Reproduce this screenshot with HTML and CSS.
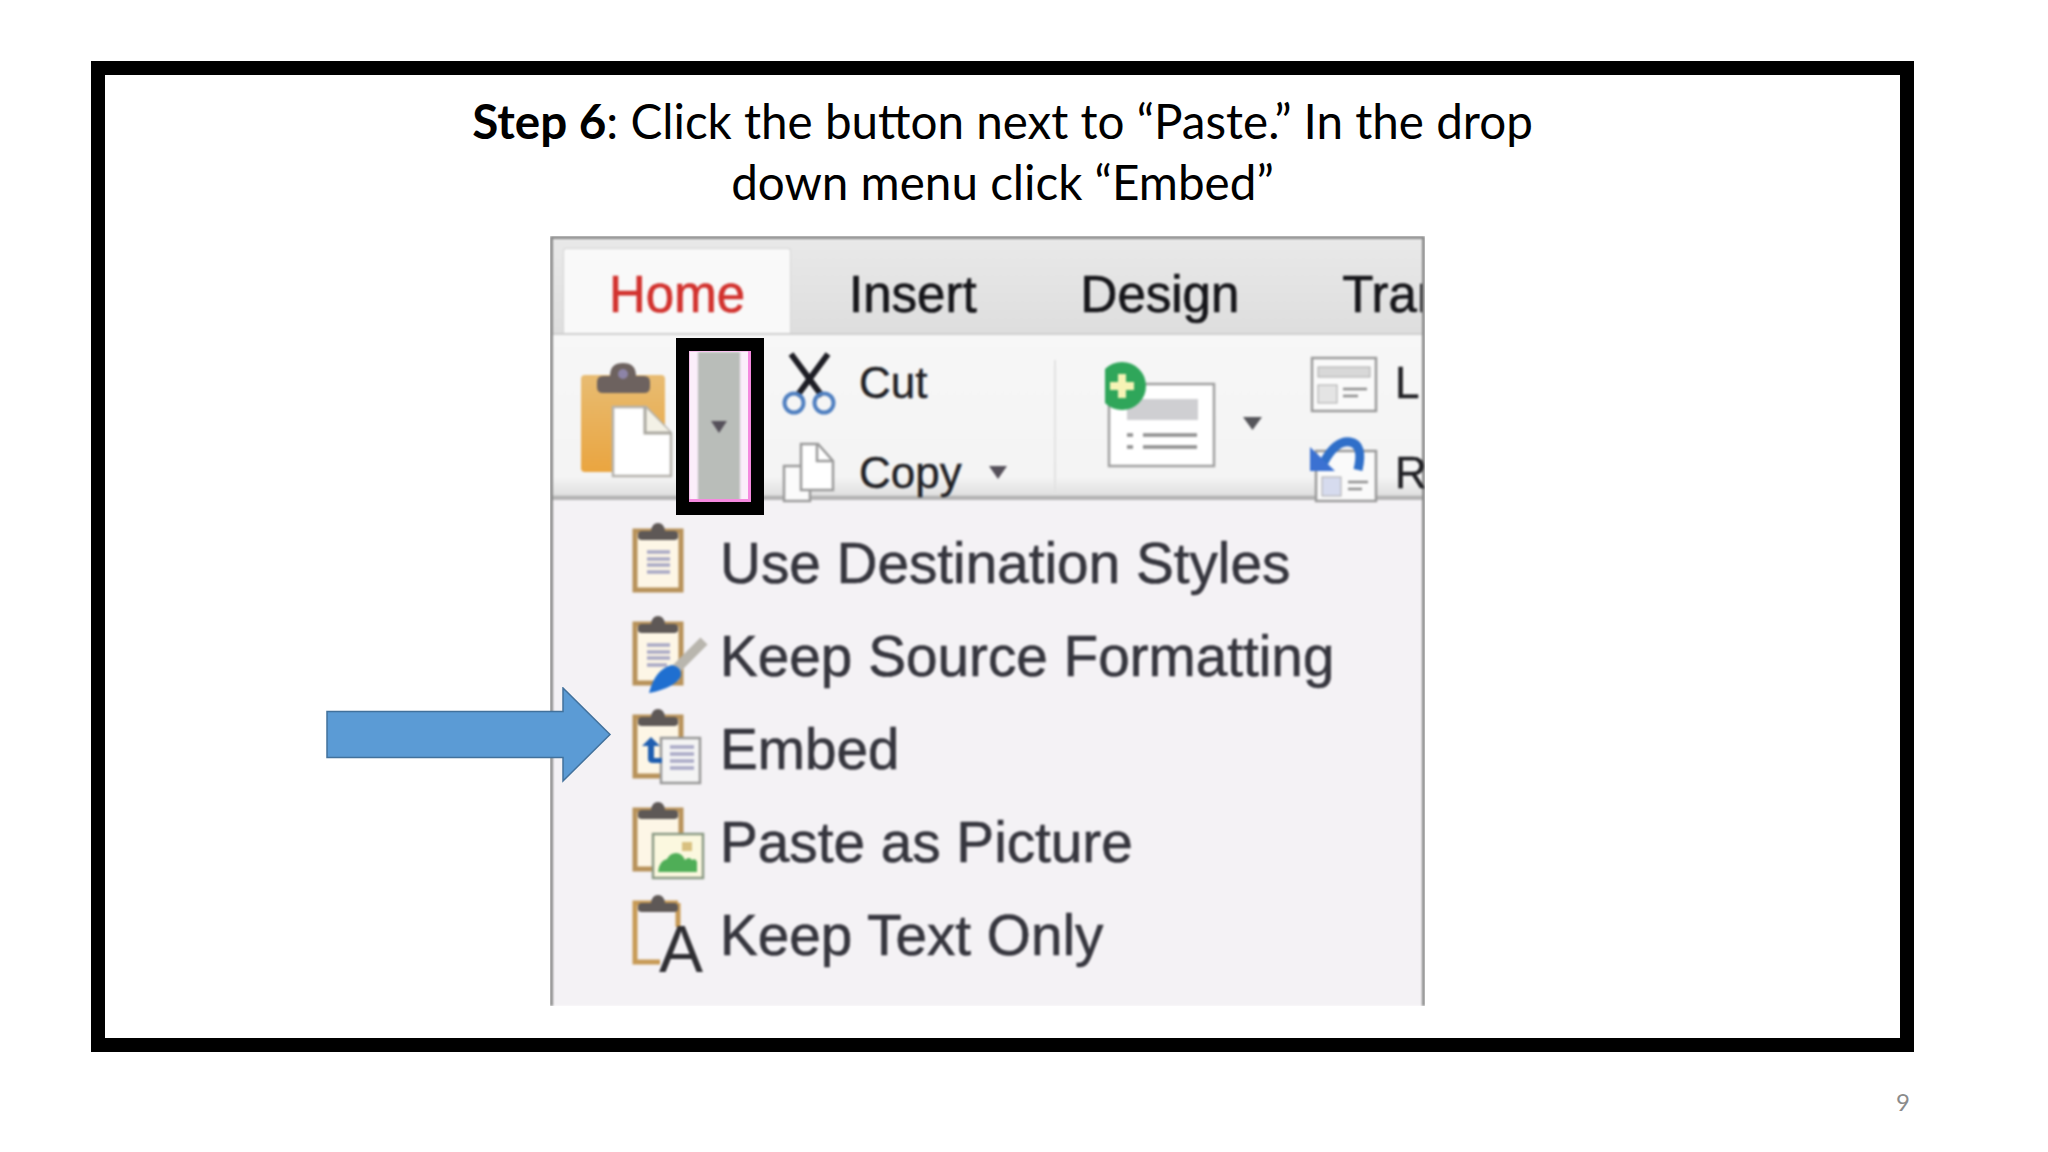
FILE: index.html
```html
<!DOCTYPE html>
<html lang="en">
<head>
<meta charset="utf-8">
<title>Step 6</title>
<link rel="stylesheet" href="styles.css">
</head>
<body>
<main class="slide">
  <section class="frame">
    <h1 class="title"><b>Step 6</b>: Click the button next to “Paste.” In the drop<br>down menu click “Embed”</h1>
    <div class="shot">
      <div class="shot-img">
        <div class="tabs">
          <span class="tab tab-active">Home</span>
          <span class="tab tab-insert">Insert</span>
          <span class="tab tab-design">Design</span>
          <span class="tab tab-trans">Tran</span>
        </div>
        <div class="ribbon">
          <svg class="ico-paste" viewBox="578 352 98 130" aria-hidden="true">
            <defs>
              <linearGradient id="pasteBoard" x1="0" y1="0" x2="0" y2="1">
                <stop offset="0" stop-color="#e8bc72"/>
                <stop offset="1" stop-color="#eaa540"/>
              </linearGradient>
            </defs>
            <rect x="581" y="375" width="84" height="97" rx="4" fill="url(#pasteBoard)"/>
            <path d="M597 382q0-6 6-6h7q0-13 13-13t13 13h8q6 0 6 6v5q0 6-6 6h-41q-6 0-6-6z" fill="#6d625f"/>
            <circle cx="623" cy="374" r="5" fill="#8d84a8"/>
            <path d="M613 407h33l25 26v43h-58z" fill="#fff" stroke="#b5b2ad" stroke-width="2.5"/>
            <path d="M645 407v26h26" fill="#f3f1e6" stroke="#aaa8a0" stroke-width="3"/>
          </svg>
          <div class="paste-btn"><i class="caret caret-small"></i></div>
          <div class="clip-col">
            <div class="rib-row">
              <svg class="ico-clip" viewBox="782 352 56 61" aria-hidden="true">
                <path d="M791 354l31 42M828 354l-31 42" stroke="#1d1d24" stroke-width="6" fill="none"/>
                <circle cx="794" cy="403" r="9.5" fill="none" stroke="#4f7fc0" stroke-width="4"/>
                <circle cx="824" cy="403" r="9.5" fill="none" stroke="#4f7fc0" stroke-width="4"/>
              </svg>
              <span class="rib-text">Cut</span>
            </div>
            <div class="rib-row">
              <svg class="ico-clip" viewBox="782 442 56 61" aria-hidden="true">
                <path d="M784 466h26v35h-26z" fill="#fbfbfb" stroke="#9b9b9b" stroke-width="2.5"/>
                <path d="M801 444h17l15 17v29h-32z" fill="#fff" stroke="#9b9b9b" stroke-width="2.5"/>
                <path d="M817 444v17h16" fill="none" stroke="#9b9b9b" stroke-width="2.5"/>
              </svg>
              <span class="rib-text">Copy</span>
              <i class="caret caret-copy"></i>
            </div>
          </div>
          <div class="divider"></div>
          <svg class="ico-new" viewBox="1105 352 160 140" aria-hidden="true">
            <rect x="1109" y="384" width="105" height="82" fill="#fff" stroke="#a0a0a0" stroke-width="2.5"/>
            <rect x="1127" y="399" width="71" height="21" fill="#cfcfd2"/>
            <path d="M1127 435h6M1127 447h6M1143 435h54M1143 447h54" stroke="#8e8e8e" stroke-width="3.5"/>
            <circle cx="1122" cy="386" r="24" fill="#2fa65a"/>
            <path d="M1122 374v24M1110 386h24" stroke="#f6f3b5" stroke-width="8"/>
            <path d="M1243 417h19l-9.500 13z" fill="#55555a"/>
          </svg>
          <div class="layout-col">
            <div class="rib-row">
              <svg class="ico-layout" viewBox="1310 352 70 61" aria-hidden="true">
                <rect x="1312" y="358" width="64" height="53" fill="#fafafa" stroke="#9a9a9a" stroke-width="2.5"/>
                <rect x="1318" y="367" width="52" height="10" fill="#d8d8d8" stroke="#aaa"/>
                <rect x="1318" y="385" width="19" height="18" fill="#e4e4e4" stroke="#aaa"/>
                <path d="M1343 389h24M1343 396h15" stroke="#8e8e8e" stroke-width="2.500"/>
              </svg>
              <span class="rib-text">L</span>
            </div>
            <div class="rib-row">
              <svg class="ico-layout" viewBox="1310 442 70 61" aria-hidden="true">
                <rect x="1316" y="451" width="60" height="50" fill="#fafafa" stroke="#9a9a9a" stroke-width="2.500"/>
                <rect x="1322" y="477" width="19" height="19" fill="#d6dbee" stroke="#aaa"/>
                <path d="M1348 482h20M1348 489h14" stroke="#8e8e8e" stroke-width="2.500"/>
                <path d="M1324 462q12-22 26-20t8 28" fill="none" stroke="#2f6fc9" stroke-width="9"/>
                <path d="M1310 447l25 24h-25z" fill="#3b71d2"/>
              </svg>
              <span class="rib-text">R</span>
            </div>
          </div>
        </div>
        <ul class="menu">
          <li class="menu-item">
            <svg class="ico-menu" viewBox="0 0 80 93" aria-hidden="true">
              <rect class="board" x="5" y="11" width="46" height="59"/>
              <path d="M17 32h23M17 39h23M17 45h23M17 52h23" class="doc-lines"/>
              <path class="clipper" d="M8 15q0-4 4-4h9q1-8 7-8t7 8h9q4 0 4 4v2q0 3-4 3h-32q-4 0-4-3z"/>
            </svg>
            <span>Use Destination Styles</span>
          </li>
          <li class="menu-item">
            <svg class="ico-menu" viewBox="0 0 80 93" aria-hidden="true">
              <rect class="board" x="5" y="11" width="46" height="59"/>
              <path d="M17 32h23M17 39h23M17 45h23M17 52h20" class="doc-lines"/>
              <path class="clipper" d="M8 15q0-4 4-4h9q1-8 7-8t7 8h9q4 0 4 4v2q0 3-4 3h-32q-4 0-4-3z"/>
              <path d="M74 28L46 56" stroke="#b9b6ae" stroke-width="10"/>
              <path d="M42 52q10 2 9 11-6 12-32 17 6-24 23-28z" fill="#1f6fd0"/>
            </svg>
            <span>Keep Source Formatting</span>
          </li>
          <li class="menu-item">
            <svg class="ico-menu" viewBox="0 0 80 93" aria-hidden="true">
              <rect class="board" x="5" y="11" width="46" height="59"/>
              <path class="clipper" d="M8 15q0-4 4-4h9q1-8 7-8t7 8h9q4 0 4 4v2q0 3-4 3h-32q-4 0-4-3z"/>
              <rect x="31" y="32" width="39" height="45" fill="#f4f4f4" stroke="#999" stroke-width="2.500"/>
              <path d="M40 41h24M40 48h24M40 55h24M40 62h24" class="doc-lines"/>
              <path d="M21 31l-9 9h6v13q0 4 5 4h9v-5h-8v-12h6z" fill="#1f5eb0"/>
            </svg>
            <span>Embed</span>
          </li>
          <li class="menu-item">
            <svg class="ico-menu" viewBox="0 0 80 93" aria-hidden="true">
              <rect class="board" x="5" y="11" width="46" height="59"/>
              <path class="clipper" d="M8 15q0-4 4-4h9q1-8 7-8t7 8h9q4 0 4 4v2q0 3-4 3h-32q-4 0-4-3z"/>
              <rect x="23" y="35" width="50" height="44" fill="#fbf8df" stroke="#8b9a85" stroke-width="2.500"/>
              <rect x="52" y="43" width="10" height="9" fill="#d8c080"/>
              <path d="M28 73q1-11 9-13 3-6 9-6t9 7q4-4 7 0 4-2 5 2v10z" fill="#4fae57"/>
            </svg>
            <span>Paste as Picture</span>
          </li>
          <li class="menu-item">
            <svg class="ico-menu" viewBox="0 0 80 93" aria-hidden="true">
              <path class="board board-plain" d="M48 11H5v59h25M48 11v24"/>
              <path class="clipper" d="M8 15q0-4 4-4h9q1-8 7-8t7 8h9q4 0 4 4v2q0 3-4 3h-32q-4 0-4-3z"/>
              <text class="ico-letter" x="29" y="80">A</text>
            </svg>
            <span>Keep Text Only</span>
          </li>
        </ul>
      </div>
      <div class="highlight"></div>
    </div>
    <svg class="arrow" viewBox="0 0 286 96" aria-hidden="true">
      <path d="M1 24.500H237V1L284 47.500 237 94V70.500H1z"/>
    </svg>
  </section>
  <footer class="page-no">9</footer>
</main>
</body>
</html>
```
FILE: styles.css
```css
* { box-sizing: border-box; }
html, body { margin: 0; padding: 0; background: #fff; }
body { width: 2048px; height: 1152px; overflow: hidden; font-family: "Lato", "Liberation Sans", sans-serif; }

.slide { display: flex; flex-direction: column; height: 1152px; padding: 61px 134px 0 91px; }

.frame {
  position: relative;
  height: 991px;
  border: 14px solid #000;
  display: flex;
  flex-direction: column;
  align-items: center;
  padding-top: 15px;
}

.title {
  margin: 0;
  font-size: 47.600px;
  font-weight: 400;
  line-height: 61px;
  text-align: center;
  color: #000;
}
.title b { font-weight: 700; }

.shot {
  position: absolute;
  left: 445px;
  top: 161px;
  width: 875px;
  height: 770px;
  overflow: hidden;
}

.shot-img {
  height: 100%;
  display: flex;
  flex-direction: column;
  background: #f4f2f5;
  border: 3px solid #8a8a8a;
  border-bottom: 0;
  font-family: "Liberation Sans", Arial, sans-serif;
  color: #222226;
  filter: blur(1.2px);
}

.tabs {
  flex: none;
  height: 96px;
  display: flex;
  align-items: flex-end;
  padding-left: 10px;
  background: linear-gradient(#e9e9e9, #dedede);
  border-bottom: 2px solid #cfcfcf;
  overflow: hidden;
  white-space: nowrap;
}
.tab {
  flex: none;
  font-size: 51px;
  height: 84px;
  line-height: 84px;
  padding-top: 4px;
  color: #16161a;
  -webkit-text-stroke: 0.7px #16161a;
}
.tab-active {
  width: 228px;
  text-align: center;
  color: #d2322e;
  -webkit-text-stroke: 0.7px #d2322e;
  background: #f9f9f9;
  border: 1px solid #d4d4d4;
  border-bottom: 0;
  border-radius: 3px 3px 0 0;
  height: 85px;
}
.tab-insert { margin-left: 58px; }
.tab-design { margin-left: 104px; }
.tab-trans { margin-left: 103px; }

.ribbon {
  position: relative;
  z-index: 1;
  flex: none;
  height: 165px;
  display: flex;
  align-items: flex-start;
  padding: 17px 0 0 25px;
  background: linear-gradient(#f7f7f7 0, #f4f4f4 86%, #e0e0e0 97%, #b0b0b0 98%, #b8b8b8 100%);
}

.ico-paste { width: 98px; height: 130px; flex: none; }

.paste-btn {
  flex: none;
  width: 63px;
  height: 150px;
  margin-left: 13px;
  padding: 0 12px 0 9px;
  display: flex;
  align-items: center;
  justify-content: center;
  background: linear-gradient(to right, #fbeefa 9px, #b9bdb9 9px, #b9bdb9 51px, #fbeefa 51px);
}

.caret {
  display: block;
  width: 0;
  height: 0;
  flex: none;
  border-style: solid;
  border-color: #55505a transparent transparent;
}
.caret-small { border-width: 12px 8px 0; margin-left: -1px; }
.caret-copy { border-width: 13px 9px 0; margin-left: 27px; }

.clip-col, .layout-col { flex: none; display: flex; flex-direction: column; gap: 29px; }
.clip-col { width: 272px; margin-left: 30px; }
.layout-col { margin-left: 45px; }

.rib-row { display: flex; align-items: center; height: 61px; }
.rib-text { font-size: 44px; color: #202024; -webkit-text-stroke: 0.4px #202024; }

.ico-clip { width: 56px; height: 61px; flex: none; margin-right: 21px; overflow: visible; }
.ico-layout { width: 70px; height: 61px; flex: none; margin-right: 15px; overflow: visible; }

.divider { flex: none; width: 2px; height: 135px; margin-top: 8px; background: #e2e2e2; }
.ico-new { width: 160px; height: 140px; flex: none; margin-left: 49px; }

.menu {
  flex: 1;
  margin: 0;
  padding: 17px 0 0 77px;
  list-style: none;
  background: #f4f2f5;
}
.menu-item {
  display: flex;
  align-items: center;
  height: 93px;
  font-size: 56.700px;
  color: #36363e;
  -webkit-text-stroke: 0.6px #36363e;
  white-space: nowrap;
}
.ico-menu { width: 80px; height: 93px; flex: none; margin: 6px 10px 0 0; overflow: visible; }

.board { fill: #fdf6e6; stroke: #b8925a; stroke-width: 5; }
.board-plain { fill: none; stroke: #c79a55; }
.clipper { fill: #5e5856; }
.doc-lines { stroke: #a9a9c6; stroke-width: 3.500; fill: none; }
.ico-letter { font-family: "Liberation Sans", Arial, sans-serif; font-size: 66px; fill: #2f2f33; }

.highlight {
  position: absolute;
  left: 126px;
  top: 102px;
  width: 88px;
  height: 177px;
  border: 13px solid #000;
  box-shadow: inset -3px -3px 0 #f58adf, inset 1px 1px 0 #f8c0ee;
}

.arrow {
  position: absolute;
  left: 221px;
  top: 612px;
  width: 286px;
  height: 96px;
}
.arrow path { fill: #5b9bd5; stroke: #41719c; stroke-width: 1.500; }

.page-no {
  margin-top: 36px;
  padding-right: 4px;
  font-size: 24px;
  line-height: 28px;
  text-align: right;
  color: #8b8b8b;
}
```
